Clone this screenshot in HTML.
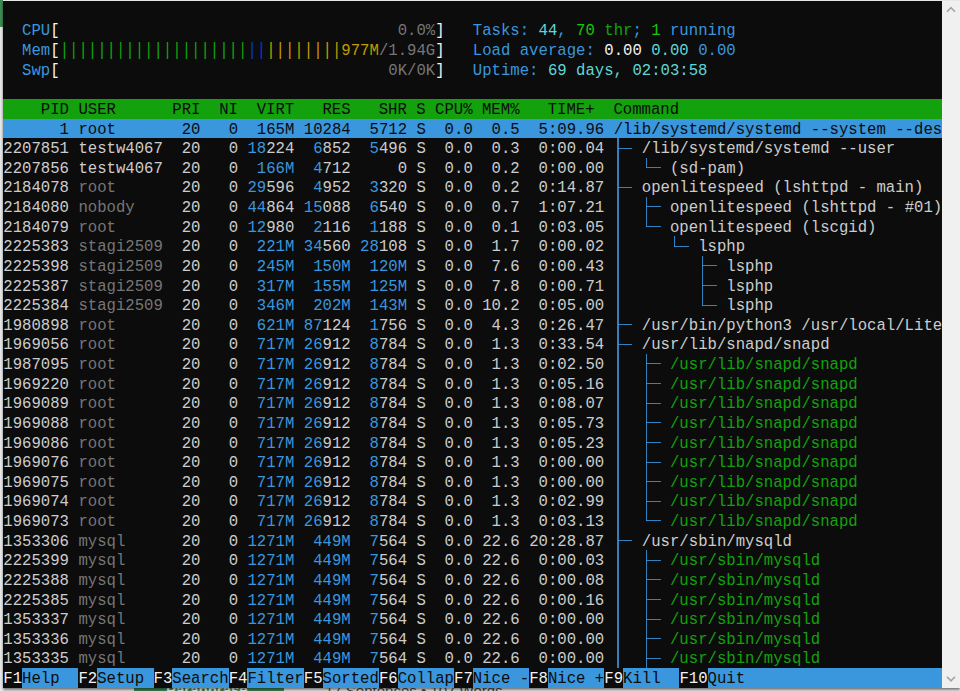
<!DOCTYPE html>
<html lang="en"><head><meta charset="utf-8"><title>htop</title>
<style>
html,body{margin:0;padding:0}
body{width:960px;height:691px;overflow:hidden;background:#fff;position:relative}
#under{position:absolute;left:0;top:0;width:960px;height:691px;background:#e9e9e9;overflow:hidden;
 font-family:"Liberation Sans",sans-serif}
#under div{position:absolute}
#win{position:absolute;left:3.3px;top:1px;width:956.7px;height:686.6px;background:#f0f0f0;box-shadow:0 1.5px 2.5px rgba(0,0,0,.5)}
#term{position:absolute;left:0;top:0;width:938.7px;height:100%;background:#0c0c0c;overflow:hidden;
 font-family:"Liberation Mono","DejaVu Sans Mono",monospace;font-size:15.65px;color:#cccccc;
 font-kerning:none;font-variant-ligatures:none}
.r{position:absolute;left:0;width:100%;height:19.62px;white-space:pre}
.r span{position:absolute;top:0;height:19.62px;line-height:23.62px;white-space:pre}
.r span.bar{transform:translateY(-0.5px) scaleY(1.15);transform-origin:center}
.ln{position:absolute;background:#3a96dd;opacity:.85}
#sb{position:absolute;left:938.7px;top:0;width:18px;height:100%;background:#f0f0f0}
#sb svg{position:absolute;left:0;width:100%}

</style></head><body>
<div id="under">
<div style="left:0;top:0;width:3.3px;height:27px;background:#3f8b55"></div>
<div style="left:0;top:686px;width:134px;height:6px;background:#ececec"></div>
<div style="left:134px;top:680px;width:150px;height:30px;background:#3f8b55;color:#fff;font-weight:bold;font-size:15px;line-height:20px;text-indent:32px;white-space:pre">Paraphrase</div>
<div style="left:284px;top:686px;width:676px;height:6px;background:#f1f1f1"></div>
<div style="left:325px;top:681px;font-size:15px;line-height:20px;color:#4a4a4a;white-space:pre">17 Sentences • 107 Words</div>
</div>
<div id="win">
<div id="term">
<div class="r" style="top:19.43px">
<span style="left:18.78px;color:#3a96dd;">CPU</span>
<span style="left:46.95px;color:#f2f2f2;">[</span>
<span style="left:394.38px;color:#767676;">0.0%</span>
<span style="left:431.94px;color:#f2f2f2;">]</span>
<span style="left:469.5px;color:#3a96dd;">Tasks: </span>
<span style="left:535.23px;color:#61d6d6;">44</span>
<span style="left:554.01px;color:#3a96dd;">, </span>
<span style="left:572.79px;color:#16c60c;">70</span>
<span style="left:591.57px;color:#13a10e;"> thr</span>
<span style="left:629.13px;color:#3a96dd;">; </span>
<span style="left:647.91px;color:#16c60c;">1</span>
<span style="left:657.3px;color:#3a96dd;"> running</span>
</div>
<div class="r" style="top:39.05px">
<span style="left:18.78px;color:#3a96dd;">Mem</span>
<span style="left:46.95px;color:#f2f2f2;">[</span>
<span class="bar" style="left:56.34px;color:#13a10e;">||||||||||||||||||||</span>
<span class="bar" style="left:244.14px;color:#0037da;">||</span>
<span class="bar" style="left:262.92px;color:#c19c00;">||||||||</span>
<span style="left:338.04px;color:#c19c00;">977M</span>
<span style="left:375.6px;color:#767676;">/1.94G</span>
<span style="left:431.94px;color:#f2f2f2;">]</span>
<span style="left:469.5px;color:#3a96dd;">Load average: </span>
<span style="left:600.96px;color:#f2f2f2;">0.00 </span>
<span style="left:647.91px;color:#61d6d6;">0.00 </span>
<span style="left:694.86px;color:#3a96dd;">0.00</span>
</div>
<div class="r" style="top:58.67px">
<span style="left:18.78px;color:#3a96dd;">Swp</span>
<span style="left:46.95px;color:#f2f2f2;">[</span>
<span style="left:384.99px;color:#767676;">0K/0K</span>
<span style="left:431.94px;color:#f2f2f2;">]</span>
<span style="left:469.5px;color:#3a96dd;">Uptime: </span>
<span style="left:544.62px;color:#61d6d6;">69 days, 02:03:58</span>
</div>
<div class="r" style="top:97.92px">
<span style="left:0px;color:#0c0c0c;background:#13a10e;width:939.05px;">    PID USER      PRI  NI  VIRT   RES   SHR S CPU% MEM%   TIME+  Command                            </span>
</div>
<div class="r" style="top:117.55px">
<span style="left:0px;color:#0c0c0c;background:#3a96dd;width:939.05px;">                                                                                                    </span>
<span style="left:0px;color:#0c0c0c;">      1</span>
<span style="left:75.12px;color:#0c0c0c;">root</span>
<span style="left:169.02px;color:#0c0c0c;"> 20</span>
<span style="left:206.58px;color:#0c0c0c;">  0</span>
<span style="left:244.14px;color:#0c0c0c;"> 165M</span>
<span style="left:300.48px;color:#0c0c0c;">10284</span>
<span style="left:356.82px;color:#0c0c0c;"> 5712</span>
<span style="left:413.16px;color:#0c0c0c;">S</span>
<span style="left:431.94px;color:#0c0c0c;"> 0.0</span>
<span style="left:478.89px;color:#0c0c0c;"> 0.5</span>
<span style="left:525.84px;color:#0c0c0c;"> 5:09.96</span>
<span style="left:610.35px;color:#0c0c0c;">/lib/systemd/systemd --system --des</span>
</div>
<div class="r" style="top:137.18px">
<span style="left:0px;">2207851</span>
<span style="left:75.12px;">testw4067</span>
<span style="left:169.02px;"> 20</span>
<span style="left:206.58px;">  0</span>
<span style="left:244.14px;color:#3a96dd;">18</span>
<span style="left:262.92px;">224</span>
<span style="left:309.87px;color:#3a96dd;">6</span>
<span style="left:319.26px;">852</span>
<span style="left:366.21px;color:#3a96dd;">5</span>
<span style="left:375.6px;">496</span>
<span style="left:413.16px;">S</span>
<span style="left:431.94px;"> 0.0</span>
<span style="left:478.89px;"> 0.3</span>
<span style="left:525.84px;"> 0:00.04</span>
<span style="left:638.52px;">/lib/systemd/systemd --user</span>
</div>
<div class="r" style="top:156.8px">
<span style="left:0px;">2207856</span>
<span style="left:75.12px;">testw4067</span>
<span style="left:169.02px;"> 20</span>
<span style="left:206.58px;">  0</span>
<span style="left:244.14px;color:#3a96dd;"> 166M</span>
<span style="left:309.87px;color:#3a96dd;">4</span>
<span style="left:319.26px;">712</span>
<span style="left:356.82px;">    0</span>
<span style="left:413.16px;">S</span>
<span style="left:431.94px;"> 0.0</span>
<span style="left:478.89px;"> 0.2</span>
<span style="left:525.84px;"> 0:00.00</span>
<span style="left:666.69px;">(sd-pam)</span>
</div>
<div class="r" style="top:176.43px">
<span style="left:0px;">2184078</span>
<span style="left:75.12px;color:#767676;">root</span>
<span style="left:169.02px;"> 20</span>
<span style="left:206.58px;">  0</span>
<span style="left:244.14px;color:#3a96dd;">29</span>
<span style="left:262.92px;">596</span>
<span style="left:309.87px;color:#3a96dd;">4</span>
<span style="left:319.26px;">952</span>
<span style="left:366.21px;color:#3a96dd;">3</span>
<span style="left:375.6px;">320</span>
<span style="left:413.16px;">S</span>
<span style="left:431.94px;"> 0.0</span>
<span style="left:478.89px;"> 0.2</span>
<span style="left:525.84px;"> 0:14.87</span>
<span style="left:638.52px;">openlitespeed (lshttpd - main)</span>
</div>
<div class="r" style="top:196.05px">
<span style="left:0px;">2184080</span>
<span style="left:75.12px;color:#767676;">nobody</span>
<span style="left:169.02px;"> 20</span>
<span style="left:206.58px;">  0</span>
<span style="left:244.14px;color:#3a96dd;">44</span>
<span style="left:262.92px;">864</span>
<span style="left:300.48px;color:#3a96dd;">15</span>
<span style="left:319.26px;">088</span>
<span style="left:366.21px;color:#3a96dd;">6</span>
<span style="left:375.6px;">540</span>
<span style="left:413.16px;">S</span>
<span style="left:431.94px;"> 0.0</span>
<span style="left:478.89px;"> 0.7</span>
<span style="left:525.84px;"> 1:07.21</span>
<span style="left:666.69px;">openlitespeed (lshttpd - #01)</span>
</div>
<div class="r" style="top:215.68px">
<span style="left:0px;">2184079</span>
<span style="left:75.12px;color:#767676;">root</span>
<span style="left:169.02px;"> 20</span>
<span style="left:206.58px;">  0</span>
<span style="left:244.14px;color:#3a96dd;">12</span>
<span style="left:262.92px;">980</span>
<span style="left:309.87px;color:#3a96dd;">2</span>
<span style="left:319.26px;">116</span>
<span style="left:366.21px;color:#3a96dd;">1</span>
<span style="left:375.6px;">188</span>
<span style="left:413.16px;">S</span>
<span style="left:431.94px;"> 0.0</span>
<span style="left:478.89px;"> 0.1</span>
<span style="left:525.84px;"> 0:03.05</span>
<span style="left:666.69px;">openlitespeed (lscgid)</span>
</div>
<div class="r" style="top:235.3px">
<span style="left:0px;">2225383</span>
<span style="left:75.12px;color:#767676;">stagi2509</span>
<span style="left:169.02px;"> 20</span>
<span style="left:206.58px;">  0</span>
<span style="left:244.14px;color:#3a96dd;"> 221M</span>
<span style="left:300.48px;color:#3a96dd;">34</span>
<span style="left:319.26px;">560</span>
<span style="left:356.82px;color:#3a96dd;">28</span>
<span style="left:375.6px;">108</span>
<span style="left:413.16px;">S</span>
<span style="left:431.94px;"> 0.0</span>
<span style="left:478.89px;"> 1.7</span>
<span style="left:525.84px;"> 0:00.02</span>
<span style="left:694.86px;">lsphp</span>
</div>
<div class="r" style="top:254.93px">
<span style="left:0px;">2225398</span>
<span style="left:75.12px;color:#767676;">stagi2509</span>
<span style="left:169.02px;"> 20</span>
<span style="left:206.58px;">  0</span>
<span style="left:244.14px;color:#3a96dd;"> 245M</span>
<span style="left:300.48px;color:#3a96dd;"> 150M</span>
<span style="left:356.82px;color:#3a96dd;"> 120M</span>
<span style="left:413.16px;">S</span>
<span style="left:431.94px;"> 0.0</span>
<span style="left:478.89px;"> 7.6</span>
<span style="left:525.84px;"> 0:00.43</span>
<span style="left:723.03px;">lsphp</span>
</div>
<div class="r" style="top:274.55px">
<span style="left:0px;">2225387</span>
<span style="left:75.12px;color:#767676;">stagi2509</span>
<span style="left:169.02px;"> 20</span>
<span style="left:206.58px;">  0</span>
<span style="left:244.14px;color:#3a96dd;"> 317M</span>
<span style="left:300.48px;color:#3a96dd;"> 155M</span>
<span style="left:356.82px;color:#3a96dd;"> 125M</span>
<span style="left:413.16px;">S</span>
<span style="left:431.94px;"> 0.0</span>
<span style="left:478.89px;"> 7.8</span>
<span style="left:525.84px;"> 0:00.71</span>
<span style="left:723.03px;">lsphp</span>
</div>
<div class="r" style="top:294.18px">
<span style="left:0px;">2225384</span>
<span style="left:75.12px;color:#767676;">stagi2509</span>
<span style="left:169.02px;"> 20</span>
<span style="left:206.58px;">  0</span>
<span style="left:244.14px;color:#3a96dd;"> 346M</span>
<span style="left:300.48px;color:#3a96dd;"> 202M</span>
<span style="left:356.82px;color:#3a96dd;"> 143M</span>
<span style="left:413.16px;">S</span>
<span style="left:431.94px;"> 0.0</span>
<span style="left:478.89px;">10.2</span>
<span style="left:525.84px;"> 0:05.00</span>
<span style="left:723.03px;">lsphp</span>
</div>
<div class="r" style="top:313.8px">
<span style="left:0px;">1980898</span>
<span style="left:75.12px;color:#767676;">root</span>
<span style="left:169.02px;"> 20</span>
<span style="left:206.58px;">  0</span>
<span style="left:244.14px;color:#3a96dd;"> 621M</span>
<span style="left:300.48px;color:#3a96dd;">87</span>
<span style="left:319.26px;">124</span>
<span style="left:366.21px;color:#3a96dd;">1</span>
<span style="left:375.6px;">756</span>
<span style="left:413.16px;">S</span>
<span style="left:431.94px;"> 0.0</span>
<span style="left:478.89px;"> 4.3</span>
<span style="left:525.84px;"> 0:26.47</span>
<span style="left:638.52px;">/usr/bin/python3 /usr/local/Lite</span>
</div>
<div class="r" style="top:333.43px">
<span style="left:0px;">1969056</span>
<span style="left:75.12px;color:#767676;">root</span>
<span style="left:169.02px;"> 20</span>
<span style="left:206.58px;">  0</span>
<span style="left:244.14px;color:#3a96dd;"> 717M</span>
<span style="left:300.48px;color:#3a96dd;">26</span>
<span style="left:319.26px;">912</span>
<span style="left:366.21px;color:#3a96dd;">8</span>
<span style="left:375.6px;">784</span>
<span style="left:413.16px;">S</span>
<span style="left:431.94px;"> 0.0</span>
<span style="left:478.89px;"> 1.3</span>
<span style="left:525.84px;"> 0:33.54</span>
<span style="left:638.52px;">/usr/lib/snapd/snapd</span>
</div>
<div class="r" style="top:353.05px">
<span style="left:0px;">1987095</span>
<span style="left:75.12px;color:#767676;">root</span>
<span style="left:169.02px;"> 20</span>
<span style="left:206.58px;">  0</span>
<span style="left:244.14px;color:#3a96dd;"> 717M</span>
<span style="left:300.48px;color:#3a96dd;">26</span>
<span style="left:319.26px;">912</span>
<span style="left:366.21px;color:#3a96dd;">8</span>
<span style="left:375.6px;">784</span>
<span style="left:413.16px;">S</span>
<span style="left:431.94px;"> 0.0</span>
<span style="left:478.89px;"> 1.3</span>
<span style="left:525.84px;"> 0:02.50</span>
<span style="left:666.69px;color:#13a10e;">/usr/lib/snapd/snapd</span>
</div>
<div class="r" style="top:372.68px">
<span style="left:0px;">1969220</span>
<span style="left:75.12px;color:#767676;">root</span>
<span style="left:169.02px;"> 20</span>
<span style="left:206.58px;">  0</span>
<span style="left:244.14px;color:#3a96dd;"> 717M</span>
<span style="left:300.48px;color:#3a96dd;">26</span>
<span style="left:319.26px;">912</span>
<span style="left:366.21px;color:#3a96dd;">8</span>
<span style="left:375.6px;">784</span>
<span style="left:413.16px;">S</span>
<span style="left:431.94px;"> 0.0</span>
<span style="left:478.89px;"> 1.3</span>
<span style="left:525.84px;"> 0:05.16</span>
<span style="left:666.69px;color:#13a10e;">/usr/lib/snapd/snapd</span>
</div>
<div class="r" style="top:392.3px">
<span style="left:0px;">1969089</span>
<span style="left:75.12px;color:#767676;">root</span>
<span style="left:169.02px;"> 20</span>
<span style="left:206.58px;">  0</span>
<span style="left:244.14px;color:#3a96dd;"> 717M</span>
<span style="left:300.48px;color:#3a96dd;">26</span>
<span style="left:319.26px;">912</span>
<span style="left:366.21px;color:#3a96dd;">8</span>
<span style="left:375.6px;">784</span>
<span style="left:413.16px;">S</span>
<span style="left:431.94px;"> 0.0</span>
<span style="left:478.89px;"> 1.3</span>
<span style="left:525.84px;"> 0:08.07</span>
<span style="left:666.69px;color:#13a10e;">/usr/lib/snapd/snapd</span>
</div>
<div class="r" style="top:411.93px">
<span style="left:0px;">1969088</span>
<span style="left:75.12px;color:#767676;">root</span>
<span style="left:169.02px;"> 20</span>
<span style="left:206.58px;">  0</span>
<span style="left:244.14px;color:#3a96dd;"> 717M</span>
<span style="left:300.48px;color:#3a96dd;">26</span>
<span style="left:319.26px;">912</span>
<span style="left:366.21px;color:#3a96dd;">8</span>
<span style="left:375.6px;">784</span>
<span style="left:413.16px;">S</span>
<span style="left:431.94px;"> 0.0</span>
<span style="left:478.89px;"> 1.3</span>
<span style="left:525.84px;"> 0:05.73</span>
<span style="left:666.69px;color:#13a10e;">/usr/lib/snapd/snapd</span>
</div>
<div class="r" style="top:431.55px">
<span style="left:0px;">1969086</span>
<span style="left:75.12px;color:#767676;">root</span>
<span style="left:169.02px;"> 20</span>
<span style="left:206.58px;">  0</span>
<span style="left:244.14px;color:#3a96dd;"> 717M</span>
<span style="left:300.48px;color:#3a96dd;">26</span>
<span style="left:319.26px;">912</span>
<span style="left:366.21px;color:#3a96dd;">8</span>
<span style="left:375.6px;">784</span>
<span style="left:413.16px;">S</span>
<span style="left:431.94px;"> 0.0</span>
<span style="left:478.89px;"> 1.3</span>
<span style="left:525.84px;"> 0:05.23</span>
<span style="left:666.69px;color:#13a10e;">/usr/lib/snapd/snapd</span>
</div>
<div class="r" style="top:451.18px">
<span style="left:0px;">1969076</span>
<span style="left:75.12px;color:#767676;">root</span>
<span style="left:169.02px;"> 20</span>
<span style="left:206.58px;">  0</span>
<span style="left:244.14px;color:#3a96dd;"> 717M</span>
<span style="left:300.48px;color:#3a96dd;">26</span>
<span style="left:319.26px;">912</span>
<span style="left:366.21px;color:#3a96dd;">8</span>
<span style="left:375.6px;">784</span>
<span style="left:413.16px;">S</span>
<span style="left:431.94px;"> 0.0</span>
<span style="left:478.89px;"> 1.3</span>
<span style="left:525.84px;"> 0:00.00</span>
<span style="left:666.69px;color:#13a10e;">/usr/lib/snapd/snapd</span>
</div>
<div class="r" style="top:470.8px">
<span style="left:0px;">1969075</span>
<span style="left:75.12px;color:#767676;">root</span>
<span style="left:169.02px;"> 20</span>
<span style="left:206.58px;">  0</span>
<span style="left:244.14px;color:#3a96dd;"> 717M</span>
<span style="left:300.48px;color:#3a96dd;">26</span>
<span style="left:319.26px;">912</span>
<span style="left:366.21px;color:#3a96dd;">8</span>
<span style="left:375.6px;">784</span>
<span style="left:413.16px;">S</span>
<span style="left:431.94px;"> 0.0</span>
<span style="left:478.89px;"> 1.3</span>
<span style="left:525.84px;"> 0:00.00</span>
<span style="left:666.69px;color:#13a10e;">/usr/lib/snapd/snapd</span>
</div>
<div class="r" style="top:490.43px">
<span style="left:0px;">1969074</span>
<span style="left:75.12px;color:#767676;">root</span>
<span style="left:169.02px;"> 20</span>
<span style="left:206.58px;">  0</span>
<span style="left:244.14px;color:#3a96dd;"> 717M</span>
<span style="left:300.48px;color:#3a96dd;">26</span>
<span style="left:319.26px;">912</span>
<span style="left:366.21px;color:#3a96dd;">8</span>
<span style="left:375.6px;">784</span>
<span style="left:413.16px;">S</span>
<span style="left:431.94px;"> 0.0</span>
<span style="left:478.89px;"> 1.3</span>
<span style="left:525.84px;"> 0:02.99</span>
<span style="left:666.69px;color:#13a10e;">/usr/lib/snapd/snapd</span>
</div>
<div class="r" style="top:510.05px">
<span style="left:0px;">1969073</span>
<span style="left:75.12px;color:#767676;">root</span>
<span style="left:169.02px;"> 20</span>
<span style="left:206.58px;">  0</span>
<span style="left:244.14px;color:#3a96dd;"> 717M</span>
<span style="left:300.48px;color:#3a96dd;">26</span>
<span style="left:319.26px;">912</span>
<span style="left:366.21px;color:#3a96dd;">8</span>
<span style="left:375.6px;">784</span>
<span style="left:413.16px;">S</span>
<span style="left:431.94px;"> 0.0</span>
<span style="left:478.89px;"> 1.3</span>
<span style="left:525.84px;"> 0:03.13</span>
<span style="left:666.69px;color:#13a10e;">/usr/lib/snapd/snapd</span>
</div>
<div class="r" style="top:529.67px">
<span style="left:0px;">1353306</span>
<span style="left:75.12px;color:#767676;">mysql</span>
<span style="left:169.02px;"> 20</span>
<span style="left:206.58px;">  0</span>
<span style="left:244.14px;color:#3a96dd;">1271M</span>
<span style="left:300.48px;color:#3a96dd;"> 449M</span>
<span style="left:366.21px;color:#3a96dd;">7</span>
<span style="left:375.6px;">564</span>
<span style="left:413.16px;">S</span>
<span style="left:431.94px;"> 0.0</span>
<span style="left:478.89px;">22.6</span>
<span style="left:525.84px;">20:28.87</span>
<span style="left:638.52px;">/usr/sbin/mysqld</span>
</div>
<div class="r" style="top:549.3px">
<span style="left:0px;">2225399</span>
<span style="left:75.12px;color:#767676;">mysql</span>
<span style="left:169.02px;"> 20</span>
<span style="left:206.58px;">  0</span>
<span style="left:244.14px;color:#3a96dd;">1271M</span>
<span style="left:300.48px;color:#3a96dd;"> 449M</span>
<span style="left:366.21px;color:#3a96dd;">7</span>
<span style="left:375.6px;">564</span>
<span style="left:413.16px;">S</span>
<span style="left:431.94px;"> 0.0</span>
<span style="left:478.89px;">22.6</span>
<span style="left:525.84px;"> 0:00.03</span>
<span style="left:666.69px;color:#13a10e;">/usr/sbin/mysqld</span>
</div>
<div class="r" style="top:568.92px">
<span style="left:0px;">2225388</span>
<span style="left:75.12px;color:#767676;">mysql</span>
<span style="left:169.02px;"> 20</span>
<span style="left:206.58px;">  0</span>
<span style="left:244.14px;color:#3a96dd;">1271M</span>
<span style="left:300.48px;color:#3a96dd;"> 449M</span>
<span style="left:366.21px;color:#3a96dd;">7</span>
<span style="left:375.6px;">564</span>
<span style="left:413.16px;">S</span>
<span style="left:431.94px;"> 0.0</span>
<span style="left:478.89px;">22.6</span>
<span style="left:525.84px;"> 0:00.08</span>
<span style="left:666.69px;color:#13a10e;">/usr/sbin/mysqld</span>
</div>
<div class="r" style="top:588.55px">
<span style="left:0px;">2225385</span>
<span style="left:75.12px;color:#767676;">mysql</span>
<span style="left:169.02px;"> 20</span>
<span style="left:206.58px;">  0</span>
<span style="left:244.14px;color:#3a96dd;">1271M</span>
<span style="left:300.48px;color:#3a96dd;"> 449M</span>
<span style="left:366.21px;color:#3a96dd;">7</span>
<span style="left:375.6px;">564</span>
<span style="left:413.16px;">S</span>
<span style="left:431.94px;"> 0.0</span>
<span style="left:478.89px;">22.6</span>
<span style="left:525.84px;"> 0:00.16</span>
<span style="left:666.69px;color:#13a10e;">/usr/sbin/mysqld</span>
</div>
<div class="r" style="top:608.17px">
<span style="left:0px;">1353337</span>
<span style="left:75.12px;color:#767676;">mysql</span>
<span style="left:169.02px;"> 20</span>
<span style="left:206.58px;">  0</span>
<span style="left:244.14px;color:#3a96dd;">1271M</span>
<span style="left:300.48px;color:#3a96dd;"> 449M</span>
<span style="left:366.21px;color:#3a96dd;">7</span>
<span style="left:375.6px;">564</span>
<span style="left:413.16px;">S</span>
<span style="left:431.94px;"> 0.0</span>
<span style="left:478.89px;">22.6</span>
<span style="left:525.84px;"> 0:00.00</span>
<span style="left:666.69px;color:#13a10e;">/usr/sbin/mysqld</span>
</div>
<div class="r" style="top:627.8px">
<span style="left:0px;">1353336</span>
<span style="left:75.12px;color:#767676;">mysql</span>
<span style="left:169.02px;"> 20</span>
<span style="left:206.58px;">  0</span>
<span style="left:244.14px;color:#3a96dd;">1271M</span>
<span style="left:300.48px;color:#3a96dd;"> 449M</span>
<span style="left:366.21px;color:#3a96dd;">7</span>
<span style="left:375.6px;">564</span>
<span style="left:413.16px;">S</span>
<span style="left:431.94px;"> 0.0</span>
<span style="left:478.89px;">22.6</span>
<span style="left:525.84px;"> 0:00.00</span>
<span style="left:666.69px;color:#13a10e;">/usr/sbin/mysqld</span>
</div>
<div class="r" style="top:647.42px">
<span style="left:0px;">1353335</span>
<span style="left:75.12px;color:#767676;">mysql</span>
<span style="left:169.02px;"> 20</span>
<span style="left:206.58px;">  0</span>
<span style="left:244.14px;color:#3a96dd;">1271M</span>
<span style="left:300.48px;color:#3a96dd;"> 449M</span>
<span style="left:366.21px;color:#3a96dd;">7</span>
<span style="left:375.6px;">564</span>
<span style="left:413.16px;">S</span>
<span style="left:431.94px;"> 0.0</span>
<span style="left:478.89px;">22.6</span>
<span style="left:525.84px;"> 0:00.00</span>
<span style="left:666.69px;color:#13a10e;">/usr/sbin/mysqld</span>
</div>
<div class="r" style="top:667.05px">
<span style="left:0px;color:#0c0c0c;background:#3a96dd;width:939.05px;">                                                                                                    </span>
<span style="left:0px;color:#f2f2f2;background:#0c0c0c;width:18.83px;">F1</span>
<span style="left:18.78px;color:#0c0c0c;">Help  </span>
<span style="left:75.12px;color:#f2f2f2;background:#0c0c0c;width:18.83px;">F2</span>
<span style="left:93.9px;color:#0c0c0c;">Setup </span>
<span style="left:150.24px;color:#f2f2f2;background:#0c0c0c;width:18.83px;">F3</span>
<span style="left:169.02px;color:#0c0c0c;">Search</span>
<span style="left:225.36px;color:#f2f2f2;background:#0c0c0c;width:18.83px;">F4</span>
<span style="left:244.14px;color:#0c0c0c;">Filter</span>
<span style="left:300.48px;color:#f2f2f2;background:#0c0c0c;width:18.83px;">F5</span>
<span style="left:319.26px;color:#0c0c0c;">Sorted</span>
<span style="left:375.6px;color:#f2f2f2;background:#0c0c0c;width:18.83px;">F6</span>
<span style="left:394.38px;color:#0c0c0c;">Collap</span>
<span style="left:450.72px;color:#f2f2f2;background:#0c0c0c;width:18.83px;">F7</span>
<span style="left:469.5px;color:#0c0c0c;">Nice -</span>
<span style="left:525.84px;color:#f2f2f2;background:#0c0c0c;width:18.83px;">F8</span>
<span style="left:544.62px;color:#0c0c0c;">Nice +</span>
<span style="left:600.96px;color:#f2f2f2;background:#0c0c0c;width:18.83px;">F9</span>
<span style="left:619.74px;color:#0c0c0c;">Kill  </span>
<span style="left:676.08px;color:#f2f2f2;background:#0c0c0c;width:28.22px;">F10</span>
<span style="left:704.25px;color:#0c0c0c;">Quit</span>
</div>
<div class="ln" style="left:614.1px;top:137.18px;width:1.5px;height:19.62px"></div>
<div class="ln" style="left:614.35px;top:146.59px;width:14.79px;height:1px"></div>
<div class="ln" style="left:614.1px;top:156.8px;width:1.5px;height:19.62px"></div>
<div class="ln" style="left:642.26px;top:156.8px;width:1.5px;height:10.41px"></div>
<div class="ln" style="left:642.51px;top:166.21px;width:14.79px;height:1px"></div>
<div class="ln" style="left:614.1px;top:176.43px;width:1.5px;height:19.62px"></div>
<div class="ln" style="left:614.35px;top:185.84px;width:14.79px;height:1px"></div>
<div class="ln" style="left:614.1px;top:196.05px;width:1.5px;height:19.62px"></div>
<div class="ln" style="left:642.26px;top:196.05px;width:1.5px;height:19.62px"></div>
<div class="ln" style="left:642.51px;top:205.46px;width:14.79px;height:1px"></div>
<div class="ln" style="left:614.1px;top:215.68px;width:1.5px;height:19.62px"></div>
<div class="ln" style="left:642.26px;top:215.68px;width:1.5px;height:10.41px"></div>
<div class="ln" style="left:642.51px;top:225.09px;width:14.79px;height:1px"></div>
<div class="ln" style="left:614.1px;top:235.3px;width:1.5px;height:19.62px"></div>
<div class="ln" style="left:670.43px;top:235.3px;width:1.5px;height:10.41px"></div>
<div class="ln" style="left:670.68px;top:244.71px;width:14.79px;height:1px"></div>
<div class="ln" style="left:614.1px;top:254.93px;width:1.5px;height:19.62px"></div>
<div class="ln" style="left:698.61px;top:254.93px;width:1.5px;height:19.62px"></div>
<div class="ln" style="left:698.86px;top:264.34px;width:14.79px;height:1px"></div>
<div class="ln" style="left:614.1px;top:274.55px;width:1.5px;height:19.62px"></div>
<div class="ln" style="left:698.61px;top:274.55px;width:1.5px;height:19.62px"></div>
<div class="ln" style="left:698.86px;top:283.96px;width:14.79px;height:1px"></div>
<div class="ln" style="left:614.1px;top:294.18px;width:1.5px;height:19.62px"></div>
<div class="ln" style="left:698.61px;top:294.18px;width:1.5px;height:10.41px"></div>
<div class="ln" style="left:698.86px;top:303.59px;width:14.79px;height:1px"></div>
<div class="ln" style="left:614.1px;top:313.8px;width:1.5px;height:19.62px"></div>
<div class="ln" style="left:614.35px;top:323.21px;width:14.79px;height:1px"></div>
<div class="ln" style="left:614.1px;top:333.43px;width:1.5px;height:19.62px"></div>
<div class="ln" style="left:614.35px;top:342.84px;width:14.79px;height:1px"></div>
<div class="ln" style="left:614.1px;top:353.05px;width:1.5px;height:19.62px"></div>
<div class="ln" style="left:642.26px;top:353.05px;width:1.5px;height:19.62px"></div>
<div class="ln" style="left:642.51px;top:362.46px;width:14.79px;height:1px"></div>
<div class="ln" style="left:614.1px;top:372.68px;width:1.5px;height:19.62px"></div>
<div class="ln" style="left:642.26px;top:372.68px;width:1.5px;height:19.62px"></div>
<div class="ln" style="left:642.51px;top:382.09px;width:14.79px;height:1px"></div>
<div class="ln" style="left:614.1px;top:392.3px;width:1.5px;height:19.62px"></div>
<div class="ln" style="left:642.26px;top:392.3px;width:1.5px;height:19.62px"></div>
<div class="ln" style="left:642.51px;top:401.71px;width:14.79px;height:1px"></div>
<div class="ln" style="left:614.1px;top:411.93px;width:1.5px;height:19.62px"></div>
<div class="ln" style="left:642.26px;top:411.93px;width:1.5px;height:19.62px"></div>
<div class="ln" style="left:642.51px;top:421.34px;width:14.79px;height:1px"></div>
<div class="ln" style="left:614.1px;top:431.55px;width:1.5px;height:19.62px"></div>
<div class="ln" style="left:642.26px;top:431.55px;width:1.5px;height:19.62px"></div>
<div class="ln" style="left:642.51px;top:440.96px;width:14.79px;height:1px"></div>
<div class="ln" style="left:614.1px;top:451.18px;width:1.5px;height:19.62px"></div>
<div class="ln" style="left:642.26px;top:451.18px;width:1.5px;height:19.62px"></div>
<div class="ln" style="left:642.51px;top:460.59px;width:14.79px;height:1px"></div>
<div class="ln" style="left:614.1px;top:470.8px;width:1.5px;height:19.62px"></div>
<div class="ln" style="left:642.26px;top:470.8px;width:1.5px;height:19.62px"></div>
<div class="ln" style="left:642.51px;top:480.21px;width:14.79px;height:1px"></div>
<div class="ln" style="left:614.1px;top:490.43px;width:1.5px;height:19.62px"></div>
<div class="ln" style="left:642.26px;top:490.43px;width:1.5px;height:19.62px"></div>
<div class="ln" style="left:642.51px;top:499.84px;width:14.79px;height:1px"></div>
<div class="ln" style="left:614.1px;top:510.05px;width:1.5px;height:19.62px"></div>
<div class="ln" style="left:642.26px;top:510.05px;width:1.5px;height:10.41px"></div>
<div class="ln" style="left:642.51px;top:519.46px;width:14.79px;height:1px"></div>
<div class="ln" style="left:614.1px;top:529.67px;width:1.5px;height:19.62px"></div>
<div class="ln" style="left:614.35px;top:539.09px;width:14.79px;height:1px"></div>
<div class="ln" style="left:614.1px;top:549.3px;width:1.5px;height:19.62px"></div>
<div class="ln" style="left:642.26px;top:549.3px;width:1.5px;height:19.62px"></div>
<div class="ln" style="left:642.51px;top:558.71px;width:14.79px;height:1px"></div>
<div class="ln" style="left:614.1px;top:568.92px;width:1.5px;height:19.62px"></div>
<div class="ln" style="left:642.26px;top:568.92px;width:1.5px;height:19.62px"></div>
<div class="ln" style="left:642.51px;top:578.34px;width:14.79px;height:1px"></div>
<div class="ln" style="left:614.1px;top:588.55px;width:1.5px;height:19.62px"></div>
<div class="ln" style="left:642.26px;top:588.55px;width:1.5px;height:19.62px"></div>
<div class="ln" style="left:642.51px;top:597.96px;width:14.79px;height:1px"></div>
<div class="ln" style="left:614.1px;top:608.17px;width:1.5px;height:19.62px"></div>
<div class="ln" style="left:642.26px;top:608.17px;width:1.5px;height:19.62px"></div>
<div class="ln" style="left:642.51px;top:617.59px;width:14.79px;height:1px"></div>
<div class="ln" style="left:614.1px;top:627.8px;width:1.5px;height:19.62px"></div>
<div class="ln" style="left:642.26px;top:627.8px;width:1.5px;height:19.62px"></div>
<div class="ln" style="left:642.51px;top:637.21px;width:14.79px;height:1px"></div>
<div class="ln" style="left:614.1px;top:647.42px;width:1.5px;height:19.62px"></div>
<div class="ln" style="left:642.26px;top:647.42px;width:1.5px;height:19.62px"></div>
<div class="ln" style="left:642.51px;top:656.84px;width:14.79px;height:1px"></div>
</div>
<div id="sb">
<svg style="top:3.3px" height="12" viewBox="0 0 18 12"><path d="M5 7.8 L9 3.6 L13 7.8" fill="none" stroke="#a3a3a3" stroke-width="1.6"/></svg>
<svg style="bottom:4px" height="12" viewBox="0 0 18 12"><path d="M5 4.7 L9 8.9 L13 4.7" fill="none" stroke="#a3a3a3" stroke-width="1.6"/></svg>
</div>
</div>
</body></html>
